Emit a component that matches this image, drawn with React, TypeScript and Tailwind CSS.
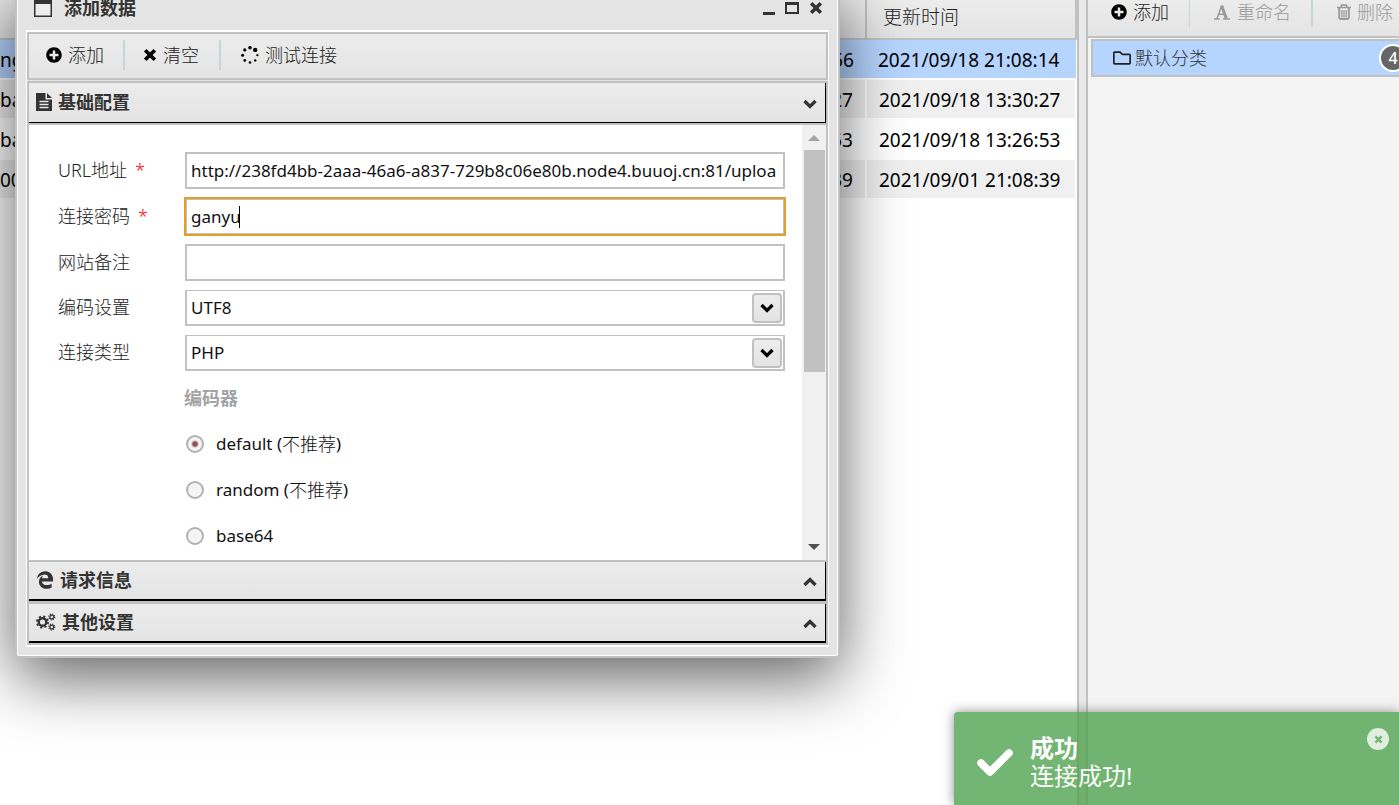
import React, { useState } from 'react';
import { FaPlusCircle, FaRegFolder, FaEdgeLegacy } from 'react-icons/fa';

const ROWS = [
  { name: 'ng', created: '56', updated: '2021/09/18 21:08:14' },
  { name: 'ba', created: '27', updated: '2021/09/18 13:30:27' },
  { name: 'ba', created: '53', updated: '2021/09/18 13:26:53' },
  { name: '00', created: '39', updated: '2021/09/01 21:08:39' },
];

const ENCODERS = [
  { id: 'default', note: '不推荐' },
  { id: 'random', note: '不推荐' },
  { id: 'base64', note: '' },
];

// ── Small glyphs ─────────────────────────────────────────────────────────────

const Cross = ({ className }: { className: string }) => (
  <svg viewBox="0 0 14 14" className={className} aria-hidden="true">
    <path d="M2.200 2.200l9.600 9.600M11.800 2.200l-9.600 9.600" stroke="currentColor" strokeWidth="3.600" fill="none" />
  </svg>
);

const Chevron = ({ up = false }: { up?: boolean }) => (
  <svg viewBox="0 0 14 10" className="h-[10px] w-[14px]" aria-hidden="true">
    <path d={up ? 'M1.500 8L7 2.500 12.500 8' : 'M1.500 2L7 7.500 12.500 2'} stroke="currentColor" strokeWidth="3.200" fill="none" />
  </svg>
);

const FileText = () => (
  <svg viewBox="0 0 16 18" className="h-[18px] w-4" aria-hidden="true">
    <path d="M0 0h9.500v6.500H16V18H0zM11 0l5 5h-5z" fill="currentColor" />
    <path d="M3.500 8.500h9M3.500 11.500h9M3.500 14.500h9" stroke="#e8e8e8" strokeWidth="1.300" />
  </svg>
);

const WindowIcon = () => (
  <svg viewBox="0 0 18 18" className="h-[18px] w-[18px]" aria-hidden="true">
    <path d="M0 0h18v18H0z" fill="#333" />
    <path d="M1.500 5h15v11.500h-15z" fill="#ededed" />
  </svg>
);

// eight dots, growing clockwise towards the upper right
const Spinner = () => (
  <svg viewBox="0 0 18 18" className="h-[18px] w-[18px] text-black" fill="currentColor" aria-hidden="true">
    <circle cx="9" cy="1.800" r="1.800" />
    <circle cx="14.200" cy="3.900" r="2.200" />
    <circle cx="16.400" cy="9.200" r="1.100" />
    <circle cx="14.200" cy="14.400" r="1.200" />
    <circle cx="9" cy="16.500" r="1.300" />
    <circle cx="3.800" cy="14.400" r="1.400" />
    <circle cx="1.600" cy="9.200" r="1.500" />
    <circle cx="3.800" cy="3.900" r="1.600" />
  </svg>
);

const Cogs = () => (
  <svg viewBox="0 0 20 18" className="h-[18px] w-5" fill="none" stroke="currentColor" aria-hidden="true">
    <circle cx="6.500" cy="9" r="3.800" strokeWidth="2.400" />
    <circle cx="6.500" cy="9" r="5.600" strokeWidth="1.800" strokeDasharray="2.200 2.200" />
    <circle cx="15.800" cy="4" r="1.900" strokeWidth="1.300" />
    <circle cx="15.800" cy="4" r="3" strokeWidth="1.100" strokeDasharray="1.180 1.180" />
    <circle cx="15.800" cy="14" r="1.900" strokeWidth="1.300" />
    <circle cx="15.800" cy="14" r="3" strokeWidth="1.100" strokeDasharray="1.180 1.180" />
  </svg>
);

const SerifA = () => (
  <svg viewBox="0 0 16 16" className="h-4 w-4" fill="none" stroke="currentColor" aria-hidden="true">
    <path d="M7.600 2L3 14.500" strokeWidth="1.500" />
    <path d="M7.600 1.500L12.300 14.500" strokeWidth="3" />
    <path d="M4.500 10.200h6M0 15h5.800M9 15h7" strokeWidth="1.600" />
  </svg>
);

const Trash = () => (
  <svg viewBox="0 0 14 16" className="h-4 w-[14px]" fill="none" stroke="currentColor" aria-hidden="true">
    <path d="M0 3.500h14M4.500 3V1h5v2" strokeWidth="1.600" />
    <path d="M2.200 4v9.500a1.500 1.500 0 001.500 1.500h6.600a1.500 1.500 0 001.500-1.500V4" strokeWidth="1.900" />
    <path d="M4.900 6v7.500M7 6v7.500M9.100 6v7.500" strokeWidth="1.200" />
  </svg>
);

// ── Background: data table ───────────────────────────────────────────────────

const DataTable = () => (
  <table className="w-full table-fixed border-collapse text-[19px] leading-6 text-black">
    <colgroup>
      <col />
      <col className="w-[210px]" />
      <col className="w-[210px]" />
    </colgroup>
    <thead>
      <tr className="h-[39px] bg-linear-to-b from-[#ececec] to-[#e4e4e4] text-left text-[#222]">
        <th className="border-b-2 border-[#c1c1c1]" />
        <th className="border-b-2 border-r-2 border-[#c1c1c1]" />
        <th className="border-b-2 border-r-2 border-[#c1c1c1] pb-1 pl-4 font-light">更新时间</th>
      </tr>
    </thead>
    <tbody>
      {ROWS.map((r, i) => {
        const cell =
          i === 0
            ? 'bg-[#b5d5ff] pt-px'
            : i % 2
              ? 'bg-[#f0f0f0] border-y-2 border-r-2 border-white pt-px'
              : 'bg-white border-y-2 border-r-2 border-white pt-px';
        return (
          <tr key={r.updated} className="h-10">
            <td className={cell}>{r.name}</td>
            <td className={`${cell} pr-3 text-right`}>{r.created}</td>
            <td className={`${cell} pl-3`}>{r.updated}</td>
          </tr>
        );
      })}
    </tbody>
  </table>
);

// ── Right: category panel ────────────────────────────────────────────────────

const CategoryPanel = () => (
  <aside className="w-[313px] shrink-0 overflow-hidden border-l-2 border-[#c1c1c1] bg-[#f4f4f4] text-lg font-light leading-6">
    <div className="flex h-[38px] items-center whitespace-nowrap border-b-2 border-[#c1c1c1] bg-linear-to-b from-[#ececec] to-[#e4e4e4] pb-3 pl-[23px]">
      <button className="flex items-center gap-[6px] text-[#222]">
        <FaPlusCircle className="h-4 w-4 text-black" />
        添加
      </button>
      <span className="ml-5 h-[30px] w-px bg-[#c4d6dc]" />
      <button disabled className="ml-6 flex items-center gap-[7px] text-[#999]">
        <SerifA />
        重命名
      </button>
      <span className="ml-5 h-[30px] w-[2px] bg-[#c4d6dc]" />
      <button disabled className="ml-6 flex items-center gap-[6px] text-[#999]">
        <Trash />
        删除
      </button>
    </div>
    <div className="ml-[3px] mt-px flex h-[38px] items-center border-2 border-r-0 border-[#c1c1c1] bg-[#b5d5ff] pl-5">
      <FaRegFolder className="mr-1 h-[18px] w-[18px] text-[#222]" />
      <span className="text-[#333]">默认分类</span>
      <span className="-mr-2 ml-auto flex h-7 w-7 items-center justify-center rounded-full border-2 border-white bg-[#666] text-base font-medium text-white">
        4
      </span>
    </div>
  </aside>
);

// ── Dialog ───────────────────────────────────────────────────────────────────

const Field = ({ id, label, required = false, children }: { id: string; label: string; required?: boolean; children: React.ReactNode }) => (
  <div className="flex items-center">
    <label htmlFor={id} className="w-[127px] shrink-0 pb-[2px] font-light text-[#222]">
      {label}
      {required && <span className="ml-2 text-[#ff0000]">*</span>}
    </label>
    <div className="relative w-[600px]">{children}</div>
  </div>
);

const Combo = ({ id, options }: { id: string; options: string[] }) => (
  <>
    <select id={id} className="block h-9 w-full appearance-none border-2 border-t border-[#c1c1c1] bg-white px-1 text-[17px] text-[#111] outline-none">
      {options.map((o) => (
        <option key={o}>{o}</option>
      ))}
    </select>
    <span className="pointer-events-none absolute right-[3px] top-[3px] flex h-[30px] w-[30px] items-center justify-center rounded-sm border-2 border-[#c1c1c1] bg-linear-to-b from-[#ececec] to-[#e4e4e4] text-black">
      <Chevron />
    </span>
  </>
);

const AccordionHeader = ({ icon, title, open = false }: { icon: React.ReactNode; title: string; open?: boolean }) => (
  <button
    aria-expanded={open}
    className={`flex w-full items-center gap-[6px] border-r border-black bg-linear-to-b from-[#ececec] to-[#e4e4e4] pb-[2px] pl-[7px] pr-2 font-bold text-[#333] ${
      open ? 'h-10 border-b' : 'h-[39px] border-b-2'
    }`}
  >
    {icon}
    {title}
    <span className="ml-auto pt-1">
      <Chevron up={!open} />
    </span>
  </button>
);

const AddDialog = () => {
  const [url, setUrl] = useState('http://238fd4bb-2aaa-46a6-a837-729b8c06e80b.node4.buuoj.cn:81/uploa');
  const [password, setPassword] = useState('ganyu');
  const [encoder, setEncoder] = useState('default');

  return (
    <section
      role="dialog"
      aria-label="添加数据"
      className="absolute -top-4 left-[15px] w-[825px] rounded-[4px] border-2 border-[#c1c1c1] bg-[#e4e4e4] text-lg leading-6 shadow-[0_20px_64px_rgba(0,0,0,0.62)]"
    >
      <div className="rounded-[2px] border border-white px-2 pb-2">
        <header className="flex h-[43px] items-center pb-[2px] pl-2 pr-[6px] text-[#333]">
          <WindowIcon />
          <h2 className="ml-3 font-bold">添加数据</h2>
          <div className="ml-auto flex items-center gap-[10px]">
            <button aria-label="最小化" className="h-[14px] w-3 border-b-3 border-[#333]" />
            <button aria-label="最大化" className="h-3 w-[14px] border-2 border-t-3 border-[#333]" />
            <button aria-label="关闭">
              <Cross className="h-[14px] w-[14px]" />
            </button>
          </div>
        </header>

        <div className="border border-y-2 border-white">
          <div className="flex h-12 items-center border-2 border-[#c1c1c1] bg-linear-to-b from-[#ececec] to-[#e4e4e4] pb-[2px] pl-[17px] font-light text-[#222]">
            <button className="flex items-center gap-[6px]">
              <FaPlusCircle className="h-4 w-4 text-black" />
              添加
            </button>
            <span className="ml-[19px] h-[30px] w-[2px] bg-[#c4d6dc]" />
            <button className="ml-[18px] flex items-center gap-[6px]">
              <Cross className="h-[14px] w-[14px] text-black" />
              清空
            </button>
            <span className="ml-5 h-[30px] w-[2px] bg-[#c4d6dc]" />
            <button className="ml-5 flex items-center gap-[6px]">
              <Spinner />
              测试连接
            </button>
          </div>

          <div className="mt-px border-2 border-[#c1c1c1]">
            <AccordionHeader open icon={<FileText />} title="基础配置" />
            <div className="flex h-[439px] border-y-2 border-[#c1c1c1] bg-white">
              <form className="min-w-0 flex-1 overflow-hidden pl-[29px] pt-[27px]">
                <div className="flex flex-col gap-[9px]">
                  <Field id="url" label="URL地址" required>
                    <input
                      id="url"
                      value={url}
                      onChange={(e) => setUrl(e.target.value)}
                      className="block h-[37px] w-full border-2 border-[#c1c1c1] bg-white px-1 text-[17px] text-[#111] outline-none"
                    />
                  </Field>
                  <Field id="pwd" label="连接密码" required>
                    <input
                      id="pwd"
                      value={password}
                      onChange={(e) => setPassword(e.target.value)}
                      className="block h-[37px] w-full border-2 border-[#c1c1c1] bg-white px-1 text-[17px] text-[#111] outline-2 -outline-offset-1 outline-[#e59f27]"
                    />
                    <span className="absolute left-[54px] top-2 h-[22px] w-px bg-black" />
                  </Field>
                  <Field id="note" label="网站备注">
                    <input id="note" className="block h-[37px] w-full border-2 border-[#c1c1c1] bg-white px-1 text-[17px] outline-none" />
                  </Field>
                  <Field id="encode" label="编码设置">
                    <Combo id="encode" options={['UTF8', 'GBK']} />
                  </Field>
                  <Field id="type" label="连接类型">
                    <Combo id="type" options={['PHP', 'ASP']} />
                  </Field>
                </div>

                <fieldset className="ml-[126px] mt-[15px]">
                  <legend className="font-bold text-[#a3a3a3]">编码器</legend>
                  <div className="mt-[22px] flex flex-col gap-[22px]">
                    {ENCODERS.map((e) => (
                      <label key={e.id} className="flex items-center whitespace-pre pl-[2px] text-[17px] text-[#111]">
                        <input
                          type="radio"
                          name="encoder"
                          checked={encoder === e.id}
                          onChange={() => setEncoder(e.id)}
                          className="mr-3 h-[18px] w-[18px] appearance-none rounded-full border-2 border-[#b5b0b2] bg-[#f4f4f4] checked:bg-[radial-gradient(circle,#905050_2px,#f4f4f4_4px)]"
                        />
                        {e.id}
                        {e.note && (
                          <>
                            {' ('}
                            <span className="text-lg font-light leading-6">{e.note}</span>)
                          </>
                        )}
                      </label>
                    ))}
                  </div>
                </fieldset>
              </form>

              <div className="flex w-6 flex-col items-center bg-[#f0f0f0] pb-[10px] pt-[10px]">
                <span className="border-x-6 border-b-6 border-x-transparent border-b-[#a3a3a3]" />
                <span className="mt-[9px] h-[222px] w-[21px] bg-[#c1c1c1]" />
                <span className="mt-auto border-x-6 border-t-6 border-x-transparent border-t-[#505050]" />
              </div>
            </div>
            <AccordionHeader icon={<FaEdgeLegacy className="h-[18px] w-[18px]" />} title="请求信息" />
            <div className="h-[3px] bg-[#c1c1c1]" />
            <AccordionHeader icon={<Cogs />} title="其他设置" />
          </div>
        </div>
      </div>
    </section>
  );
};

// ── Toast ────────────────────────────────────────────────────────────────────

const Toast = () => (
  <div
    role="status"
    className="absolute bottom-0 right-0 flex h-[93px] w-[445px] items-center rounded-tl-[4px] bg-[#51a351] pl-[22px] pr-[10px] pt-[6px] text-2xl leading-7 text-white opacity-80 shadow-[0_0_12px_#777]"
  >
    <svg viewBox="0 0 38 30" className="h-[30px] w-[38px]" aria-hidden="true">
      <path d="M5 16l9 9L33 6" stroke="currentColor" strokeWidth="7.500" strokeLinecap="round" strokeLinejoin="round" fill="none" />
    </svg>
    <div className="ml-4">
      <div className="font-bold">成功</div>
      <div>连接成功!</div>
    </div>
    <button aria-label="关闭提示" className="mb-auto ml-auto mt-[10px] flex h-[22px] w-[22px] items-center justify-center rounded-full bg-white/80 text-[#51a351]">
      <Cross className="h-[9px] w-[9px]" />
    </button>
  </div>
);

export default function App() {
  return (
    <div className="relative flex h-screen overflow-hidden bg-white font-['Noto_Sans','Noto_Sans_CJK_SC',sans-serif]">
      <main className="min-w-0 flex-1 overflow-hidden">
        <DataTable />
      </main>
      <div className="w-[9px] shrink-0 border-l-2 border-[#c1c1c1] bg-[#e9e9e9]" />
      <CategoryPanel />
      <AddDialog />
      <Toast />
    </div>
  );
}
